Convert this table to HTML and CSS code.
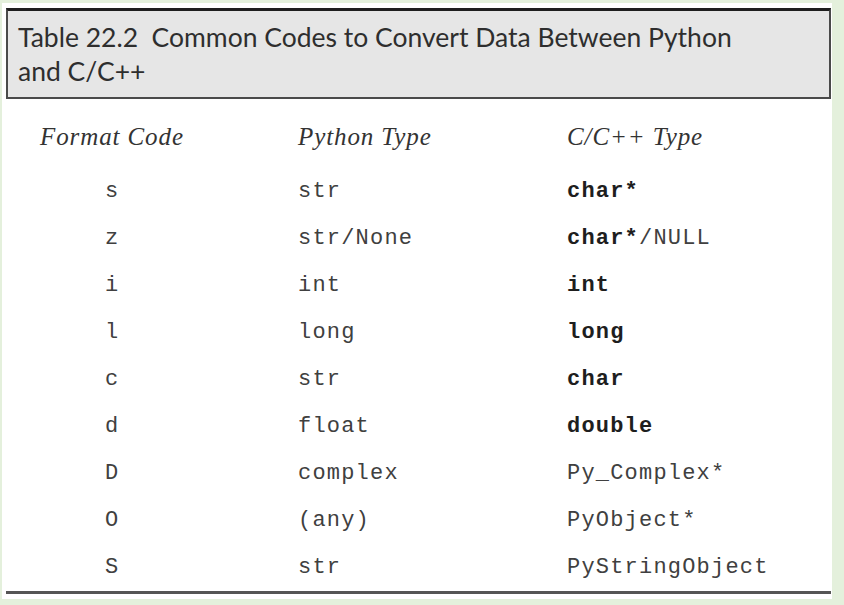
FILE: index.html
```html
<!DOCTYPE html>
<html>
<head>
<meta charset="utf-8">
<link rel="stylesheet" href="styles.css">
</head>
<body>
<div class="panel">
  <div class="caption">Table 22.2&nbsp; Common Codes to Convert Data Between Python<br>and C/C++</div>
  <div class="table">
    <div class="th">Format Code</div>
    <div class="th">Python Type</div>
    <div class="th">C/C++ Type</div>

    <div class="td code">s</div><div class="td">str</div><div class="td"><b>char*</b></div>
    <div class="td code">z</div><div class="td">str/None</div><div class="td"><b>char*</b>/NULL</div>
    <div class="td code">i</div><div class="td">int</div><div class="td"><b>int</b></div>
    <div class="td code">l</div><div class="td">long</div><div class="td"><b>long</b></div>
    <div class="td code">c</div><div class="td">str</div><div class="td"><b>char</b></div>
    <div class="td code">d</div><div class="td">float</div><div class="td"><b>double</b></div>
    <div class="td code">D</div><div class="td">complex</div><div class="td">Py_Complex*</div>
    <div class="td code">O</div><div class="td">(any)</div><div class="td">PyObject*</div>
    <div class="td code">S</div><div class="td">str</div><div class="td">PyStringObject</div>
  </div>
</div>
</body>
</html>
```
FILE: styles.css
```css
html, body {
  margin: 0;
  padding: 0;
}
body {
  background: #e4f0dc;
  width: 844px;
  height: 605px;
  padding: 3px 0 0 2px;
  box-sizing: border-box;
}
.panel {
  background: #ffffff;
  width: 830px;
  height: 596px;
  box-sizing: border-box;
  padding: 5px 1px 0 4px;
}
.caption {
  background: #e6e6e6;
  border: 2px solid #4a4a4a;
  border-top: 3px solid #1e1e1e;
  height: 91px;
  box-sizing: border-box;
  padding: 9px 10px 0 10px;
  font-family: "Lato", "Open Sans", sans-serif;
  font-size: 26.5px;
  line-height: 34px;
  color: #2e2e2e;
}
.table {
  display: grid;
  grid-template-columns: 258px 269px 1fr;
  grid-template-rows: 55px;
  grid-auto-rows: 47px;
  padding-left: 34px;
  margin-top: 14px;
  border-bottom: 3px solid #555555;
}
.th {
  font-family: "Liberation Serif", serif;
  font-style: italic;
  font-size: 25px;
  letter-spacing: 0.9px;
  color: #333;
  display: flex;
  align-items: center;
  padding-bottom: 8px;
}
.td {
  font-family: "Liberation Mono", monospace;
  font-size: 22px;
  letter-spacing: 1.2px;
  color: #404040;
  display: flex;
  align-items: center;
  white-space: pre;
}
.td b {
  font-weight: bold;
  color: #1e1e1e;
}
.code {
  padding-left: 65px;
}
```
